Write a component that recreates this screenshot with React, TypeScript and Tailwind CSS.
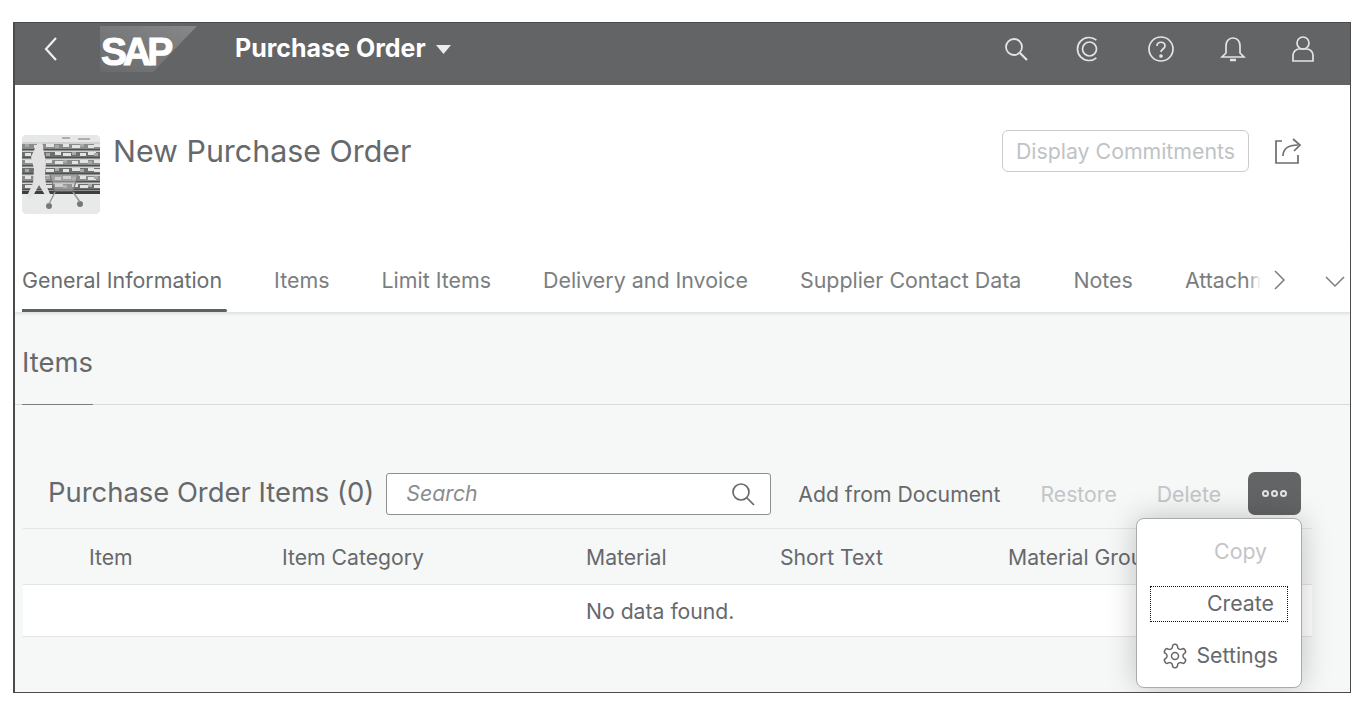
import React from "react";

const shelfBands = [9, 17, 25, 33, 41, 49];
const shelfItems = [3, 12, 24, 33, 41, 50, 58, 66, 72];

function Photo() {
  return (
    <svg width="78" height="79" viewBox="0 0 78 79" className="rounded-[5px] shrink-0">
      <rect width="78" height="79" fill="#cfd0d0" />
      <rect width="78" height="7" fill="#e6e7e7" />
      <path d="M40 3h8M56 4h12" stroke="#9a9b9b" strokeWidth="1.5" />
      {shelfBands.map((y, i) => (
        <g key={y}>
          <rect y={y} width="78" height="5" fill={i % 2 ? "#6d6e6e" : "#8a8b8b"} />
          <rect y={y + 5} width="78" height="1.5" fill="#4f5050" />
          {shelfItems.map((x, j) => (
            <rect key={x} x={x} y={y + ((i + j) % 2)} width={4 + ((i + j) % 3) * 2} height="3" fill={(i + j) % 3 ? "#e3e3e3" : "#a8a9a9"} />
          ))}
        </g>
      ))}
      <rect y="56" width="78" height="3" fill="#3d3e3e" />
      <rect y="59" width="78" height="20" fill="#e8e9e9" />
      <path d="M15 9c4-2 7 0 6 4l3 14-1 13 1 10 4 9-5 1-6-10-6 11-4 3-2-3 6-13 1-14-3-12z" fill="#e2e2e2" />
      <path d="M28 40h28l-5 16H33z" fill="#b9baba" fillOpacity="0.5" stroke="#7a7a7a" strokeWidth="1.2" />
      <circle cx="27" cy="71" r="3" fill="#777" />
      <circle cx="58" cy="69" r="3" fill="#777" />
      <path d="M33 57l-6 12M51 57l7 10" stroke="#999" strokeWidth="1.5" />
    </svg>
  );
}

function SapLogo() {
  return (
    <div className="relative w-[97px] h-[46px] shrink-0">
      <svg width="97" height="46" viewBox="0 0 97 46" className="absolute inset-0">
        <defs>
          <linearGradient id="sapBg" x1="1" y1="0" x2="0" y2="1">
            <stop offset="0" stopColor="#87888a" />
            <stop offset="1" stopColor="#696a6c" />
          </linearGradient>
        </defs>
        <path d="M0 0H97L53 46H0z" fill="url(#sapBg)" />
      </svg>
      <span className="absolute left-[1px] top-[5px] text-white text-[39px] leading-[42px] font-bold tracking-[-4px] [-webkit-text-stroke:1px_white] font-['Liberation_Sans',sans-serif]">
        SAP
      </span>
    </div>
  );
}

function Tab({ label, active }: { label: string; active?: boolean }) {
  return (
    <div className="relative h-full flex items-center shrink-0 pt-[4px]">
      <span className={active ? "text-[#6a6d70]" : "text-[#7b7e80]"}>{label}</span>
      {active && <div className="absolute left-[-5px] right-[-5px] bottom-0 h-[3px] rounded-full bg-[#5f6062]" />}
    </div>
  );
}

export default function App() {
  return (
    <div className="w-[1370px] h-[710px] bg-white overflow-hidden pl-[13px] pt-[22px] font-['Inter','Noto_Sans',sans-serif]">
      <div className="relative w-[1338px] h-[671px] border border-[#4a4b4d] border-l-2 flex flex-col bg-white overflow-hidden">
        {/* shell bar */}
        <header className="h-[62px] shrink-0 bg-[#636466] flex items-center pb-[10px] text-[#e8e8e8]">
          <svg width="16" height="26" viewBox="0 0 16 26" fill="none" stroke="#f0f0f0" strokeWidth="2.2" className="ml-[28px] shrink-0">
            <path d="M13 2L3 13l10 11" />
          </svg>
          <div className="ml-[41px] self-start mt-[3px] shrink-0"><SapLogo /></div>
          <span className="ml-[38px] text-white font-bold text-[25px]">Purchase Order</span>
          <svg width="15" height="9" viewBox="0 0 15 9" className="ml-[10px] shrink-0"><path d="M0 0h15L7.5 9z" fill="#ececec" /></svg>
          <div className="ml-auto flex items-center gap-[45px] pr-[35px]">
            <svg width="26" height="26" viewBox="0 0 26 26" fill="none" stroke="#e4e4e4" strokeWidth="1.8" className="mr-[2px]"><circle cx="11" cy="11" r="8" /><path d="M17 17l7 7" strokeWidth="2.2" /></svg>
            <svg width="26" height="28" viewBox="0 0 26 28" fill="none" stroke="#e4e4e4" strokeWidth="1.7"><path d="M20.4 5.2A11.5 11.5 0 1 0 20.4 22.8" /><circle cx="13.5" cy="14" r="7" /></svg>
            <svg width="28" height="28" viewBox="0 0 28 28" fill="none" stroke="#e4e4e4" strokeWidth="1.7"><circle cx="14" cy="14" r="12" /><path d="M10 11c0-5 8-5 8 0 0 3-4 3-4 6" /><circle cx="14" cy="21" r="1" fill="#e4e4e4" /></svg>
            <svg width="26" height="28" viewBox="0 0 26 28" fill="none" stroke="#e4e4e4" strokeWidth="1.7"><path d="M13 3c-5 0-7 4-7 8v7l-4 4h22l-4-4v-7c0-4-2-8-7-8z" /><path d="M10 25h6" strokeWidth="2.5" /></svg>
            <svg width="24" height="28" viewBox="0 0 24 28" fill="none" stroke="#e4e4e4" strokeWidth="1.7"><circle cx="12" cy="8" r="6" /><path d="M2 26v-6c0-3 3-6 6-6h8c3 0 6 3 6 6v6z" /></svg>
          </div>
        </header>

        {/* object header */}
        <div className="h-[160px] shrink-0 flex items-start pl-[7px] pt-[50px]">
          <Photo />
          <h1 className="ml-[13px] mt-[-6px] text-[30.4px] leading-[44px] text-[#66696c] font-normal">New Purchase Order</h1>
          <div className="ml-auto flex items-center mt-[-5px] pr-[48px]">
            <div className="h-[42px] w-[247px] border border-[#c9cbcc] rounded-[6px] flex items-center justify-center pt-[2px] text-[21.3px] text-[#c0c3c5]">Display Commitments</div>
            <svg width="28" height="28" viewBox="0 0 28 28" fill="none" stroke="#6b6d70" strokeWidth="1.7" className="ml-[25px]">
              <path d="M8 4H2v22h22v-8" /><path d="M9 19c0-7 5-11 15-11" /><path d="M19 2l7 6-6 6" />
            </svg>
          </div>
        </div>

        {/* tabs */}
        <div className="relative h-[67px] shrink-0 flex items-center pl-[7px] pr-[11px] text-[21.4px] shadow-[0_2px_3px_rgba(0,0,0,0.1)] z-10 bg-white">
          <div className="w-[1258px] h-full flex gap-[52px] overflow-hidden pr-[40px]">
            <Tab label="General Information" active />
            <Tab label="Items" />
            <Tab label="Limit Items" />
            <Tab label="Delivery and Invoice" />
            <Tab label="Supplier Contact Data" />
            <Tab label="Notes" />
            <div className="relative h-full flex items-center shrink-0 w-[76px] pt-[4px] overflow-hidden whitespace-nowrap text-[#7b7e80]">
              Attachments
              <div className="absolute right-0 top-0 bottom-0 w-[14px] bg-gradient-to-r from-white/0 to-white" />
            </div>
          </div>
          <svg width="14" height="22" viewBox="0 0 14 22" fill="none" stroke="#7b7e80" strokeWidth="1.5" className="absolute left-[1258px] top-[24px]"><path d="M2 2l9 9-9 9" /></svg>
          <svg width="22" height="14" viewBox="0 0 22 14" fill="none" stroke="#7b7e80" strokeWidth="1.5" className="absolute left-[1309px] top-[30px]"><path d="M2 2l9 9 9-9" /></svg>
        </div>

        {/* body */}
        <main className="flex-1 bg-[#f6f7f7] flex flex-col">
          <div className="h-[93px] shrink-0 border-b border-[#d9dadb] flex">
            <div className="ml-[7px] w-[71px] h-[93px] border-b border-[#7b7e80] text-[27.4px] leading-[100px] text-[#66696c]">
              Items
            </div>
          </div>

          <div className="h-[123px] shrink-0 flex items-center pl-[33px] pt-[54px] pr-[49px]">
            <span className="mt-[-2px] text-[27.4px] text-[#66696c] whitespace-nowrap">Purchase Order Items (0)</span>
            <div className="ml-[12px] w-[385px] h-[42px] shrink-0 bg-white border border-[#8d9093] rounded-[3px] flex items-center pl-[19px] pr-[14px]">
              <span className="italic text-[21.3px] text-[#8a8d90]">Search</span>
              <svg width="26" height="26" viewBox="0 0 26 26" fill="none" stroke="#66696c" strokeWidth="1.7" className="ml-auto"><circle cx="11" cy="11" r="8" /><path d="M17 17l7 7" /></svg>
            </div>
            <span className="ml-[27px] pt-[2px] text-[21.2px] text-[#66696c] whitespace-nowrap">Add from Document</span>
            <span className="ml-[40px] pt-[2px] text-[21.2px] text-[#c3c5c7]">Restore</span>
            <span className="ml-[40px] pt-[2px] text-[21.2px] text-[#c3c5c7]">Delete</span>
            <div className="ml-auto w-[53px] h-[43px] rounded-[7px] bg-[#636466] flex items-center justify-center gap-[2px]">
              <span className="w-[7px] h-[7px] rounded-full border-2 border-[#e4e4e4]" />
              <span className="w-[7px] h-[7px] rounded-full border-2 border-[#e4e4e4]" />
              <span className="w-[7px] h-[7px] rounded-full border-2 border-[#e4e4e4]" />
            </div>
          </div>

          <div className="ml-[8px] w-[1289px] border-t border-[#e3e4e5] text-[21.2px] text-[#66696c]">
            <div className="h-[56px] pl-[66px] pt-[3px] grid grid-cols-[193px_304px_194px_228px_1fr] items-center border-b border-[#e3e4e5]">
              <span>Item</span>
              <span>Item Category</span>
              <span>Material</span>
              <span>Short Text</span>
              <span className="whitespace-nowrap">Material Group</span>
            </div>
            <div className="h-[52px] bg-white border-b border-[#e3e4e5] flex items-center pl-[563px] pt-[2px]">No data found.</div>
          </div>
        </main>

        {/* overflow menu */}
        <div className="absolute left-[1121px] top-[495px] w-[166px] h-[170px] z-20 bg-white rounded-[8px] border border-[#a9abad] shadow-[0_0_30px_rgba(0,0,0,0.22)] text-[21.3px] flex flex-col px-[13px] pt-[7px]">
          <div className="h-[52px] flex items-center justify-end pr-[21px] text-[#c3c5c7] shrink-0">Copy</div>
          <div className="h-[36px] mt-[8px] border border-dotted border-[#111] flex items-center justify-end pr-[13px] text-[#66696c] shrink-0">Create</div>
          <div className="h-[52px] mt-[8px] flex items-center justify-end pr-[10px] text-[#66696c] gap-[7px] shrink-0">
            <svg width="28" height="28" viewBox="0 0 24 24" fill="none" stroke="#66696c" strokeWidth="1.3">
              <circle cx="12" cy="12" r="3" />
              <path d="M12.22 2h-.44a2 2 0 0 0-2 2v.18a2 2 0 0 1-1 1.73l-.43.25a2 2 0 0 1-2 0l-.15-.08a2 2 0 0 0-2.73.73l-.22.38a2 2 0 0 0 .73 2.73l.15.1a2 2 0 0 1 1 1.72v.51a2 2 0 0 1-1 1.74l-.15.09a2 2 0 0 0-.73 2.73l.22.38a2 2 0 0 0 2.73.73l.15-.08a2 2 0 0 1 2 0l.43.25a2 2 0 0 1 1 1.73V20a2 2 0 0 0 2 2h.44a2 2 0 0 0 2-2v-.18a2 2 0 0 1 1-1.73l.43-.25a2 2 0 0 1 2 0l.15.08a2 2 0 0 0 2.73-.73l.22-.39a2 2 0 0 0-.73-2.73l-.15-.08a2 2 0 0 1-1-1.74v-.5a2 2 0 0 1 1-1.74l.15-.09a2 2 0 0 0 .73-2.73l-.22-.38a2 2 0 0 0-2.73-.73l-.15.08a2 2 0 0 1-2 0l-.43-.25a2 2 0 0 1-1-1.73V4a2 2 0 0 0-2-2z" />
            </svg>
            Settings
          </div>
        </div>
      </div>
    </div>
  );
}
